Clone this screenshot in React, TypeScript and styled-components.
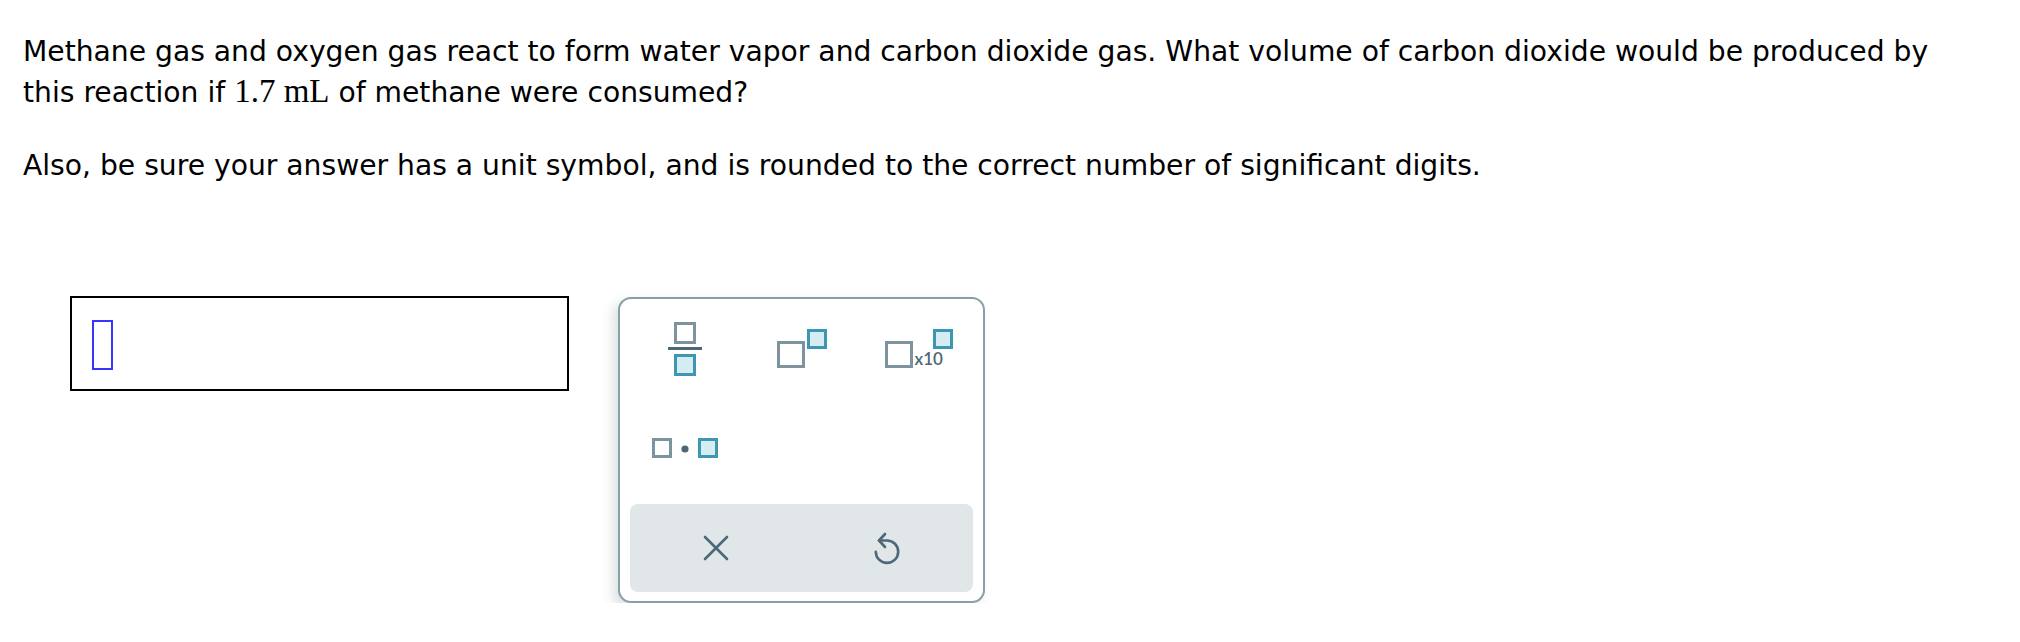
import React from "react";
import styled, { createGlobalStyle } from "styled-components";

const GlobalStyle = createGlobalStyle`
  html, body { margin: 0; padding: 0; background: #ffffff; }
  body { font-family: Verdana, "DejaVu Sans", sans-serif; color: #000; }
`;

const Page = styled.div`
  padding: 31px 0 0 23px;
  width: 1958px;
  box-sizing: border-box;
`;

const Question = styled.p`
  margin: 0;
  font-size: 28.2px;
  line-height: 41px;
  & + & { margin-top: 32px; }
`;

const MathText = styled.span`
  font-family: "Liberation Serif", "Times New Roman", serif;
  font-size: 33px;
  line-height: 1;
`;

const AnswerRow = styled.div`
  display: flex;
  align-items: flex-start;
  margin-top: 110px;
  padding-left: 47px;
  gap: 49px;
`;

const AnswerBox = styled.div`
  width: 499px;
  height: 95px;
  box-sizing: border-box;
  border: 2px solid #000;
  padding: 22px 0 0 20px;
`;

const Cursor = styled.div`
  width: 21px;
  height: 50px;
  box-sizing: border-box;
  border: 2px solid #3535ff;
`;

const Keypad = styled.div`
  margin-top: 1px;
  width: 367px;
  height: 306px;
  box-sizing: border-box;
  border: 2px solid #8a9ea8;
  border-radius: 13px;
  background: #fff;
  box-shadow: -5px 5px 12px rgba(40, 60, 70, 0.16);
  padding: 0 6px 9px;
  display: flex;
  flex-direction: column;
`;

const KeyGrid = styled.div`
  display: grid;
  grid-template-columns: repeat(3, 1fr);
  grid-auto-rows: 99px;
`;

const Key = styled.button`
  border: none;
  background: transparent;
  padding: 0;
  margin: 0;
  display: flex;
  align-items: center;
  justify-content: center;
  cursor: pointer;
`;

const ActionBar = styled.div`
  margin: 7px 4px 0 4px;
  height: 88px;
  background: #e1e6e9;
  border-radius: 8px;
  display: grid;
  grid-template-columns: 1fr 1fr;
`;

const ActionButton = styled.button`
  border: none;
  background: transparent;
  padding: 0;
  display: flex;
  align-items: center;
  justify-content: center;
  cursor: pointer;
`;

const GRAY = "#7d939e";
const TEAL = "#3e97b2";
const FILL = "#d5ecf2";
const DARK = "#4d6774";

const FractionIcon = () => (
  <svg width="34" height="54" viewBox="0 0 34 54">
    <rect x="7.5" y="1.5" width="19" height="19" fill="#fff" stroke={GRAY} strokeWidth="3" />
    <rect x="0" y="25" width="34" height="3" fill={DARK} />
    <rect x="7.5" y="33.5" width="19" height="19" fill={FILL} stroke={TEAL} strokeWidth="3" />
  </svg>
);

const SuperscriptIcon = () => (
  <svg width="50" height="39" viewBox="0 0 50 39">
    <rect x="1.5" y="13.5" width="25" height="24" fill="#fff" stroke={GRAY} strokeWidth="3" />
    <rect x="31.5" y="1.5" width="17" height="17" fill={FILL} stroke={TEAL} strokeWidth="3" />
  </svg>
);

const SciIcon = () => (
  <svg width="68" height="39" viewBox="0 0 68 39">
    <rect x="1.5" y="13.5" width="25" height="24" fill="#fff" stroke={GRAY} strokeWidth="3" />
    <text x="29.5" y="36" fontFamily="Lato, 'Open Sans', sans-serif" fontSize="17" fontWeight="600" fill={DARK}>x10</text>
    <rect x="49.5" y="1.5" width="17" height="17" fill={FILL} stroke={TEAL} strokeWidth="3" />
  </svg>
);

const DotIcon = () => (
  <svg width="66" height="20" viewBox="0 0 66 20">
    <rect x="1.5" y="1.5" width="17" height="17" fill="#fff" stroke={GRAY} strokeWidth="3" />
    <circle cx="33" cy="11" r="3.6" fill={DARK} />
    <rect x="47.5" y="1.5" width="17" height="17" fill={FILL} stroke={TEAL} strokeWidth="3" />
  </svg>
);

const ClearIcon = () => (
  <svg width="26" height="26" viewBox="0 0 26 26">
    <path d="M2 2 L24 24 M24 2 L2 24" stroke="#4b6976" strokeWidth="2.6" strokeLinecap="round" fill="none" />
  </svg>
);

const UndoIcon = () => (
  <svg width="30" height="36" viewBox="0 0 30 36">
    <path
      d="M7 10.5 L15 10.5 A11.2 11.2 0 1 1 3.8 21.7"
      stroke="#4b6976"
      strokeWidth="2.6"
      strokeLinecap="round"
      strokeLinejoin="round"
      fill="none"
    />
    <path
      d="M13 4 L7 10.5 L13 17"
      stroke="#4b6976"
      strokeWidth="2.6"
      strokeLinecap="round"
      strokeLinejoin="round"
      fill="none"
    />
  </svg>
);

export default function App() {
  return (
    <>
      <GlobalStyle />
      <Page>
        <Question>
          Methane gas and oxygen gas react to form water vapor and carbon dioxide gas. What volume of carbon dioxide would be produced by
          this reaction if <MathText>1.7&nbsp;mL</MathText> of methane were consumed?
        </Question>
        <Question>
          Also, be sure your answer has a unit symbol, and is rounded to the correct number of significant digits.
        </Question>
        <AnswerRow>
          <AnswerBox>
            <Cursor />
          </AnswerBox>
          <Keypad>
            <KeyGrid>
              <Key aria-label="fraction"><FractionIcon /></Key>
              <Key aria-label="superscript"><SuperscriptIcon /></Key>
              <Key aria-label="scientific notation"><SciIcon /></Key>
              <Key aria-label="multiplication dot"><DotIcon /></Key>
            </KeyGrid>
            <ActionBar>
              <ActionButton aria-label="clear"><ClearIcon /></ActionButton>
              <ActionButton aria-label="undo"><UndoIcon /></ActionButton>
            </ActionBar>
          </Keypad>
        </AnswerRow>
      </Page>
    </>
  );
}
